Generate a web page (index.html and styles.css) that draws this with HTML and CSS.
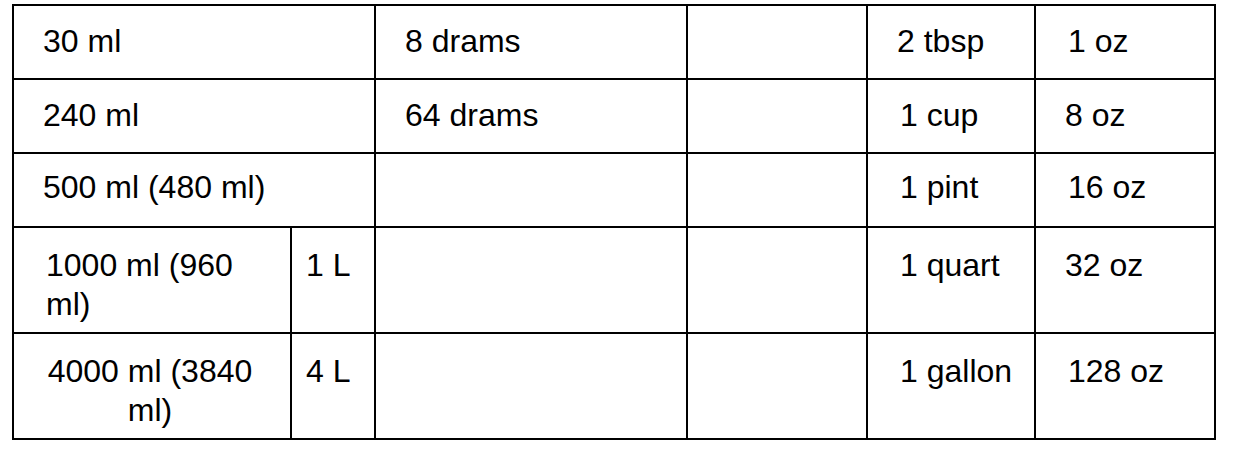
FILE: index.html
```html
<!DOCTYPE html>
<html>
<head>
<meta charset="utf-8">
<link rel="stylesheet" href="styles.css">
</head>
<body>
<table class="conv">
  <colgroup>
    <col class="c1"><col class="c2"><col class="c3"><col class="c4"><col class="c5"><col class="c6">
  </colgroup>
  <tr class="short">
    <td colspan="2">30 ml</td>
    <td>8 drams</td>
    <td></td>
    <td>2 tbsp</td>
    <td class="one">1 oz</td>
  </tr>
  <tr class="short">
    <td colspan="2">240 ml</td>
    <td>64 drams</td>
    <td></td>
    <td class="one">1 cup</td>
    <td>8 oz</td>
  </tr>
  <tr class="short r3">
    <td colspan="2">500 ml (480 ml)</td>
    <td></td>
    <td></td>
    <td class="one">1 pint</td>
    <td class="one">16 oz</td>
  </tr>
  <tr class="tall">
    <td class="wrap one">1000 ml (960 ml)</td>
    <td class="narrow">1 L</td>
    <td></td>
    <td></td>
    <td class="one">1 quart</td>
    <td>32 oz</td>
  </tr>
  <tr class="tall">
    <td class="wrap center">4000 ml (3840 ml)</td>
    <td class="narrow">4 L</td>
    <td></td>
    <td></td>
    <td class="one">1 gallon</td>
    <td class="one">128 oz</td>
  </tr>
</table>
</body>
</html>
```

FILE: styles.css
```css
html, body {
  margin: 0;
  padding: 0;
  background: #ffffff;
}

body {
  padding: 4px 0 0 12px;
  font-family: "Liberation Sans", Arial, Helvetica, sans-serif;
  color: #000000;
}

.conv {
  border-collapse: collapse;
  table-layout: fixed;
  width: 1204px;
  font-size: 32px;
  line-height: 39px;
}

.c1 { width: 278px; }
.c2 { width: 84px; }
.c3 { width: 312px; }
.c4 { width: 180px; }
.c5 { width: 168px; }
.c6 { width: 180px; }

.conv td {
  border: 2px solid #000000;
  vertical-align: top;
  text-align: left;
  padding: 16px 4px 0 29px;
  box-sizing: border-box;
  white-space: nowrap;
}

.conv tr.short { height: 74px; }
.conv tr.tall { height: 106px; }

.conv tr.r3 td { padding-top: 14px; }
.conv tr.tall td { padding-top: 18px; }

.conv td.one {
  padding-left: 32px;
}

.conv td.wrap {
  white-space: normal;
  padding-right: 29px;
}

.conv td.narrow {
  padding-left: 14px;
  padding-right: 4px;
}

.conv td.center {
  text-align: center;
  padding-left: 29px;
  padding-right: 33px;
}
```
